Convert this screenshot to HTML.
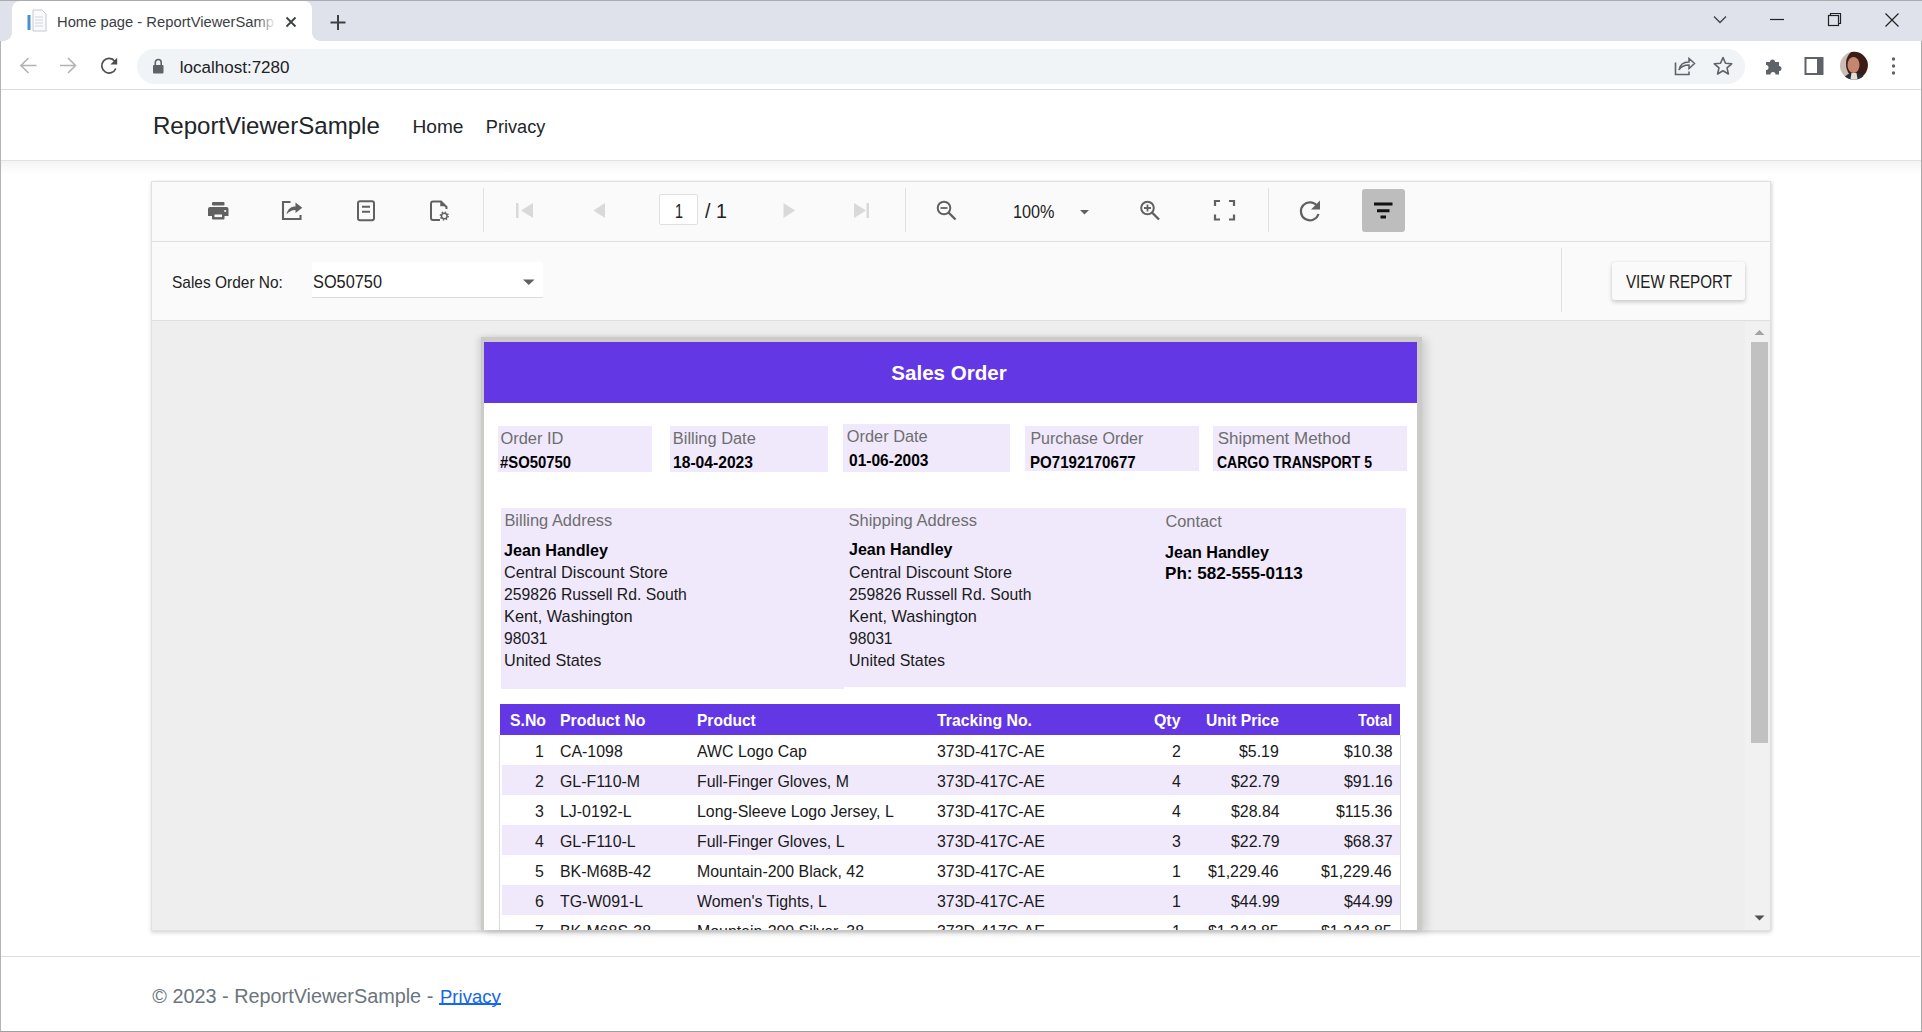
<!DOCTYPE html><html lang="en"><head><meta charset="utf-8"><title>Home page - ReportViewerSample</title><style>

*{margin:0;padding:0;box-sizing:content-box}
html,body{width:1922px;height:1032px;overflow:hidden;background:#fff;font-family:"Liberation Sans",sans-serif;}
.t{position:absolute;white-space:nowrap;line-height:1;transform-origin:0 0;}

</style></head><body>
<div style="position:absolute;left:0;top:0;width:1922px;height:41px;background:#dfe2ea;"></div>
<div style="position:absolute;left:0;top:0;width:1922px;height:1px;background:#a9abb0;"></div>
<div style="position:absolute;left:12px;top:1px;width:300px;height:48px;background:#fff;border-radius:8px 8px 0 0;"></div>
<div style="position:absolute;left:4px;top:33px;width:8px;height:8px;background:radial-gradient(circle at 0 0,#dfe2ea 7.5px,#fff 8px);"></div>
<div style="position:absolute;left:312px;top:33px;width:8px;height:8px;background:radial-gradient(circle at 100% 0,#dfe2ea 7.5px,#fff 8px);"></div>
<div style="position:absolute;left:0;top:41px;width:1922px;height:48px;background:#fff;"></div>
<div style="position:absolute;left:0;top:89px;width:1922px;height:1px;background:#dadce0;"></div>
<div style="position:absolute;left:137px;top:49px;width:1608px;height:35px;background:#f0f4f7;border-radius:18px;"></div>
<div style="position:absolute;left:0;top:41px;width:1px;height:991px;background:#b4b4b4;"></div>
<div style="position:absolute;left:1921px;top:41px;width:1px;height:991px;background:#a8a8a8;"></div>
<div style="position:absolute;left:0;top:1031px;width:1922px;height:1px;background:#a0a0a0;"></div>
<div style="position:absolute;left:1px;top:160px;width:1920px;height:1px;background:#e2e2e2;"></div>
<div style="position:absolute;left:1px;top:161px;width:1920px;height:14px;background:linear-gradient(rgba(0,0,0,.045),rgba(0,0,0,0));"></div>
<div style="position:absolute;left:1px;top:956px;width:1919px;height:1px;background:#dcdcdc;"></div>
<div style="position:absolute;left:439px;top:1003px;width:62px;height:1.5px;background:#1467e6;"></div>
<div style="position:absolute;left:151px;top:181px;width:1620px;height:750px;background:#eeeeee;border:1px solid #e0e0e0;box-sizing:border-box;box-shadow:0 2px 4px rgba(0,0,0,.14), 2px 0 3px rgba(0,0,0,.06);"></div>
<div style="position:absolute;left:152px;top:182px;width:1618px;height:59px;background:#fafafa;border-bottom:1px solid #e0e0e0;"></div>
<div style="position:absolute;left:152px;top:242px;width:1618px;height:78px;background:#fafafa;border-bottom:1px solid #e0e0e0;"></div>
<div style="position:absolute;left:483px;top:188px;width:1px;height:44px;background:#e0e0e0;"></div>
<div style="position:absolute;left:905px;top:188px;width:1px;height:44px;background:#e0e0e0;"></div>
<div style="position:absolute;left:1268px;top:188px;width:1px;height:44px;background:#e0e0e0;"></div>
<div style="position:absolute;left:1561px;top:248px;width:1px;height:64px;background:#e0e0e0;"></div>
<div style="position:absolute;left:659px;top:194px;width:39px;height:31px;background:#fff;border:1px solid #e0e0e0;box-sizing:border-box;border-radius:2px;"></div>
<div style="position:absolute;left:1362px;top:189px;width:43px;height:43px;background:#bdbdbd;border-radius:3px;"></div>
<div style="position:absolute;left:312px;top:262px;width:231px;height:35px;background:#fff;border-bottom:1px solid #dcdcdc;"></div>
<div style="position:absolute;left:1612px;top:262px;width:133px;height:38px;background:#fafafa;border-radius:2px;box-shadow:0 2px 4px rgba(0,0,0,.2),0 0 1px rgba(0,0,0,.15);"></div>
<div style="position:absolute;left:1745px;top:322px;width:24px;height:608px;background:#f1f1f1;"></div>
<div style="position:absolute;left:1751px;top:342px;width:17px;height:401px;background:#c1c1c1;"></div>
<div style="position:absolute;left:481px;top:337px;width:941px;height:593px;background:#cdcbc7;box-shadow:-3px 0 6px rgba(0,0,0,.10), 5px 2px 8px rgba(0,0,0,.12);"></div>
<div style="position:absolute;left:484px;top:342px;width:933px;height:588px;background:#fff;"></div>
<div style="position:absolute;left:484px;top:342px;width:933px;height:61px;background:#6337e3;"></div>
<div style="position:absolute;left:498px;top:426px;width:154px;height:46px;background:#f0e9fc;"></div>
<div style="position:absolute;left:670px;top:426px;width:158px;height:46px;background:#f0e9fc;"></div>
<div style="position:absolute;left:843px;top:424px;width:167px;height:48px;background:#f0e9fc;"></div>
<div style="position:absolute;left:1025px;top:426px;width:174px;height:45px;background:#f0e9fc;"></div>
<div style="position:absolute;left:1213px;top:426px;width:194px;height:45px;background:#f0e9fc;"></div>
<div style="position:absolute;left:501px;top:508px;width:343px;height:181px;background:#f0e9fc;"></div>
<div style="position:absolute;left:843px;top:508px;width:563px;height:179px;background:#f0e9fc;"></div>
<div style="position:absolute;left:500px;top:704px;width:900px;height:31px;background:#6337e3;"></div>
<div style="position:absolute;left:502px;top:735px;width:898px;height:30px;background:#fff;"></div>
<div style="position:absolute;left:502px;top:765px;width:898px;height:30px;background:#f0e9fc;"></div>
<div style="position:absolute;left:502px;top:795px;width:898px;height:30px;background:#fff;"></div>
<div style="position:absolute;left:502px;top:825px;width:898px;height:30px;background:#f0e9fc;"></div>
<div style="position:absolute;left:502px;top:855px;width:898px;height:30px;background:#fff;"></div>
<div style="position:absolute;left:502px;top:885px;width:898px;height:30px;background:#f0e9fc;"></div>
<div style="position:absolute;left:502px;top:915px;width:898px;height:15px;background:#fff;"></div>
<div style="position:absolute;left:499px;top:735px;width:1px;height:195px;background:#dadada;"></div>
<div style="position:absolute;left:1400px;top:735px;width:1px;height:195px;background:#dadada;"></div>
<div class="t" style="left:57.00px;top:15.00px;font-size:14.75px;color:#3c4043;">Home page - ReportViewerSamp</div>
<div class="t" style="left:179.70px;top:58.80px;font-size:17.05px;color:#202124;">localhost:7280</div>
<div class="t" style="left:152.90px;top:114.00px;font-size:24.07px;color:#212529;">ReportViewerSample</div>
<div class="t" style="left:412.50px;top:116.90px;font-size:19.12px;color:#212529;">Home</div>
<div class="t" style="left:485.80px;top:117.90px;font-size:18.15px;color:#212529;">Privacy</div>
<div class="t" style="left:152.30px;top:986.80px;font-size:19.83px;color:#6c757d;">© 2023 - ReportViewerSample -</div>
<div class="t" style="left:440.00px;top:987.80px;font-size:18.52px;color:#1467e6;">Privacy</div>
<div class="t" style="left:674.80px;top:202.00px;font-size:19.48px;color:#212121;transform:scaleX(0.7401);">1</div>
<div class="t" style="left:704.50px;top:202.00px;font-size:19.48px;color:#212121;transform:scaleX(1.0061);">/ 1</div>
<div class="t" style="left:1013.00px;top:201.70px;font-size:19.19px;color:#212121;transform:scaleX(0.8458);">100%</div>
<div class="t" style="left:172.40px;top:274.00px;font-size:17.15px;color:#212121;transform:scaleX(0.9026);">Sales Order No:</div>
<div class="t" style="left:312.50px;top:273.00px;font-size:18.60px;color:#212121;transform:scaleX(0.8778);">SO50750</div>
<div class="t" style="left:1625.80px;top:273.00px;font-size:18.90px;color:#212121;transform:scaleX(0.8034);">VIEW REPORT</div>
<div style="position:absolute;left:484px;top:342px;width:933px;height:588px;overflow:hidden">
<div class="t" style="left:407.30px;top:20.80px;font-size:20.55px;font-weight:bold;color:#ffffff;">Sales Order</div>
<div class="t" style="left:16.40px;top:87.60px;font-size:16.43px;color:#6e6e6e;">Order ID</div>
<div class="t" style="left:16.40px;top:112.50px;font-size:15.99px;font-weight:bold;color:#000;transform:scaleX(0.9285);">#SO50750</div>
<div class="t" style="left:188.80px;top:87.60px;font-size:16.41px;color:#6e6e6e;">Billing Date</div>
<div class="t" style="left:188.80px;top:112.50px;font-size:15.99px;font-weight:bold;color:#000;transform:scaleX(0.9782);">18-04-2023</div>
<div class="t" style="left:362.80px;top:85.70px;font-size:16.37px;color:#6e6e6e;">Order Date</div>
<div class="t" style="left:365.30px;top:111.00px;font-size:15.99px;font-weight:bold;color:#000;transform:scaleX(0.9721);">01-06-2003</div>
<div class="t" style="left:546.40px;top:88.60px;font-size:16.01px;color:#6e6e6e;">Purchase Order</div>
<div class="t" style="left:546.40px;top:112.50px;font-size:15.99px;font-weight:bold;color:#000;transform:scaleX(0.9434);">PO7192170677</div>
<div class="t" style="left:733.70px;top:88.60px;font-size:16.97px;color:#6e6e6e;">Shipment Method</div>
<div class="t" style="left:732.70px;top:112.50px;font-size:15.99px;font-weight:bold;color:#000;transform:scaleX(0.8767);">CARGO TRANSPORT 5</div>
<div class="t" style="left:20.40px;top:169.70px;font-size:16.46px;color:#6e6e6e;">Billing Address</div>
<div class="t" style="left:364.50px;top:170.70px;font-size:16.52px;color:#6e6e6e;">Shipping Address</div>
<div class="t" style="left:681.40px;top:170.70px;font-size:16.39px;color:#6e6e6e;">Contact</div>
<div class="t" style="left:20.40px;top:200.60px;font-size:16.86px;font-weight:bold;color:#000;transform:scaleX(0.9567);">Jean Handley</div>
<div class="t" style="left:364.50px;top:200.30px;font-size:16.86px;font-weight:bold;color:#000;transform:scaleX(0.9521);">Jean Handley</div>
<div class="t" style="left:681.40px;top:202.60px;font-size:16.86px;font-weight:bold;color:#000;transform:scaleX(0.9567);">Jean Handley</div>
<div class="t" style="left:681.40px;top:224.40px;font-size:16.86px;font-weight:bold;color:#000;transform:scaleX(1.0130);">Ph: 582-555-0113</div>
<div class="t" style="left:20.40px;top:221.80px;font-size:17.15px;color:#1a1a1a;transform:scaleX(0.9505);">Central Discount Store</div>
<div class="t" style="left:364.50px;top:222.30px;font-size:17.15px;color:#1a1a1a;transform:scaleX(0.9447);">Central Discount Store</div>
<div class="t" style="left:20.40px;top:243.80px;font-size:17.15px;color:#1a1a1a;transform:scaleX(0.9182);">259826 Russell Rd. South</div>
<div class="t" style="left:364.50px;top:244.30px;font-size:17.15px;color:#1a1a1a;transform:scaleX(0.9157);">259826 Russell Rd. South</div>
<div class="t" style="left:20.40px;top:265.80px;font-size:17.15px;color:#1a1a1a;transform:scaleX(0.9543);">Kent, Washington</div>
<div class="t" style="left:364.50px;top:266.30px;font-size:17.15px;color:#1a1a1a;transform:scaleX(0.9498);">Kent, Washington</div>
<div class="t" style="left:20.40px;top:287.80px;font-size:17.15px;color:#1a1a1a;transform:scaleX(0.9144);">98031</div>
<div class="t" style="left:364.50px;top:288.30px;font-size:17.15px;color:#1a1a1a;transform:scaleX(0.9144);">98031</div>
<div class="t" style="left:20.40px;top:309.80px;font-size:17.15px;color:#1a1a1a;transform:scaleX(0.9461);">United States</div>
<div class="t" style="left:364.50px;top:310.30px;font-size:17.15px;color:#1a1a1a;transform:scaleX(0.9325);">United States</div>
<div class="t" style="left:25.60px;top:371.30px;font-size:16.86px;font-weight:bold;color:#ffffff;transform:scaleX(0.9375);">S.No</div>
<div class="t" style="left:76.00px;top:371.30px;font-size:16.86px;font-weight:bold;color:#ffffff;transform:scaleX(0.9408);">Product No</div>
<div class="t" style="left:212.80px;top:371.30px;font-size:16.86px;font-weight:bold;color:#ffffff;transform:scaleX(0.9216);">Product</div>
<div class="t" style="left:452.90px;top:371.30px;font-size:16.86px;font-weight:bold;color:#ffffff;transform:scaleX(0.9387);">Tracking No.</div>
<div class="t" style="left:670.30px;top:371.30px;font-size:16.86px;font-weight:bold;color:#ffffff;transform:scaleX(0.9426);">Qty</div>
<div class="t" style="left:722.10px;top:371.30px;font-size:16.86px;font-weight:bold;color:#ffffff;transform:scaleX(0.9276);">Unit Price</div>
<div class="t" style="left:874.20px;top:371.30px;font-size:16.86px;font-weight:bold;color:#ffffff;transform:scaleX(0.8711);">Total</div>
<div class="t" style="left:51.18px;top:400.60px;font-size:17.00px;color:#1a1a1a;transform:scaleX(0.9350);">1</div>
<div class="t" style="left:76.30px;top:400.60px;font-size:17.00px;color:#1a1a1a;transform:scaleX(0.9350);">CA-1098</div>
<div class="t" style="left:213.00px;top:400.60px;font-size:17.00px;color:#1a1a1a;transform:scaleX(0.9350);">AWC Logo Cap</div>
<div class="t" style="left:453.30px;top:400.60px;font-size:17.00px;color:#1a1a1a;transform:scaleX(0.9350);">373D-417C-AE</div>
<div class="t" style="left:687.98px;top:400.60px;font-size:17.00px;color:#1a1a1a;transform:scaleX(0.9350);">2</div>
<div class="t" style="left:755.32px;top:400.60px;font-size:17.00px;color:#1a1a1a;transform:scaleX(0.9350);">$5.19</div>
<div class="t" style="left:859.60px;top:400.60px;font-size:17.00px;color:#1a1a1a;transform:scaleX(0.9350);">$10.38</div>
<div class="t" style="left:51.18px;top:430.60px;font-size:17.00px;color:#1a1a1a;transform:scaleX(0.9350);">2</div>
<div class="t" style="left:76.30px;top:430.60px;font-size:17.00px;color:#1a1a1a;transform:scaleX(0.9350);">GL-F110-M</div>
<div class="t" style="left:213.00px;top:430.60px;font-size:17.00px;color:#1a1a1a;transform:scaleX(0.9350);">Full-Finger Gloves, M</div>
<div class="t" style="left:453.30px;top:430.60px;font-size:17.00px;color:#1a1a1a;transform:scaleX(0.9350);">373D-417C-AE</div>
<div class="t" style="left:687.98px;top:430.60px;font-size:17.00px;color:#1a1a1a;transform:scaleX(0.9350);">4</div>
<div class="t" style="left:746.50px;top:430.60px;font-size:17.00px;color:#1a1a1a;transform:scaleX(0.9350);">$22.79</div>
<div class="t" style="left:859.60px;top:430.60px;font-size:17.00px;color:#1a1a1a;transform:scaleX(0.9350);">$91.16</div>
<div class="t" style="left:51.18px;top:460.60px;font-size:17.00px;color:#1a1a1a;transform:scaleX(0.9350);">3</div>
<div class="t" style="left:76.30px;top:460.60px;font-size:17.00px;color:#1a1a1a;transform:scaleX(0.9350);">LJ-0192-L</div>
<div class="t" style="left:213.00px;top:460.60px;font-size:17.00px;color:#1a1a1a;transform:scaleX(0.9350);">Long-Sleeve Logo Jersey, L</div>
<div class="t" style="left:453.30px;top:460.60px;font-size:17.00px;color:#1a1a1a;transform:scaleX(0.9350);">373D-417C-AE</div>
<div class="t" style="left:687.98px;top:460.60px;font-size:17.00px;color:#1a1a1a;transform:scaleX(0.9350);">4</div>
<div class="t" style="left:746.50px;top:460.60px;font-size:17.00px;color:#1a1a1a;transform:scaleX(0.9350);">$28.84</div>
<div class="t" style="left:851.93px;top:460.60px;font-size:17.00px;color:#1a1a1a;transform:scaleX(0.9350);">$115.36</div>
<div class="t" style="left:51.18px;top:490.60px;font-size:17.00px;color:#1a1a1a;transform:scaleX(0.9350);">4</div>
<div class="t" style="left:76.30px;top:490.60px;font-size:17.00px;color:#1a1a1a;transform:scaleX(0.9350);">GL-F110-L</div>
<div class="t" style="left:213.00px;top:490.60px;font-size:17.00px;color:#1a1a1a;transform:scaleX(0.9350);">Full-Finger Gloves, L</div>
<div class="t" style="left:453.30px;top:490.60px;font-size:17.00px;color:#1a1a1a;transform:scaleX(0.9350);">373D-417C-AE</div>
<div class="t" style="left:687.98px;top:490.60px;font-size:17.00px;color:#1a1a1a;transform:scaleX(0.9350);">3</div>
<div class="t" style="left:746.50px;top:490.60px;font-size:17.00px;color:#1a1a1a;transform:scaleX(0.9350);">$22.79</div>
<div class="t" style="left:859.60px;top:490.60px;font-size:17.00px;color:#1a1a1a;transform:scaleX(0.9350);">$68.37</div>
<div class="t" style="left:51.18px;top:520.60px;font-size:17.00px;color:#1a1a1a;transform:scaleX(0.9350);">5</div>
<div class="t" style="left:76.30px;top:520.60px;font-size:17.00px;color:#1a1a1a;transform:scaleX(0.9350);">BK-M68B-42</div>
<div class="t" style="left:213.00px;top:520.60px;font-size:17.00px;color:#1a1a1a;transform:scaleX(0.9350);">Mountain-200 Black, 42</div>
<div class="t" style="left:453.30px;top:520.60px;font-size:17.00px;color:#1a1a1a;transform:scaleX(0.9350);">373D-417C-AE</div>
<div class="t" style="left:687.98px;top:520.60px;font-size:17.00px;color:#1a1a1a;transform:scaleX(0.9350);">1</div>
<div class="t" style="left:724.37px;top:520.60px;font-size:17.00px;color:#1a1a1a;transform:scaleX(0.9350);">$1,229.46</div>
<div class="t" style="left:837.47px;top:520.60px;font-size:17.00px;color:#1a1a1a;transform:scaleX(0.9350);">$1,229.46</div>
<div class="t" style="left:51.18px;top:550.60px;font-size:17.00px;color:#1a1a1a;transform:scaleX(0.9350);">6</div>
<div class="t" style="left:76.30px;top:550.60px;font-size:17.00px;color:#1a1a1a;transform:scaleX(0.9350);">TG-W091-L</div>
<div class="t" style="left:213.00px;top:550.60px;font-size:17.00px;color:#1a1a1a;transform:scaleX(0.9350);">Women&#x27;s Tights, L</div>
<div class="t" style="left:453.30px;top:550.60px;font-size:17.00px;color:#1a1a1a;transform:scaleX(0.9350);">373D-417C-AE</div>
<div class="t" style="left:687.98px;top:550.60px;font-size:17.00px;color:#1a1a1a;transform:scaleX(0.9350);">1</div>
<div class="t" style="left:746.50px;top:550.60px;font-size:17.00px;color:#1a1a1a;transform:scaleX(0.9350);">$44.99</div>
<div class="t" style="left:859.60px;top:550.60px;font-size:17.00px;color:#1a1a1a;transform:scaleX(0.9350);">$44.99</div>
<div class="t" style="left:51.18px;top:580.60px;font-size:17.00px;color:#1a1a1a;transform:scaleX(0.9350);">7</div>
<div class="t" style="left:76.30px;top:580.60px;font-size:17.00px;color:#1a1a1a;transform:scaleX(0.9350);">BK-M68S-38</div>
<div class="t" style="left:213.00px;top:580.60px;font-size:17.00px;color:#1a1a1a;transform:scaleX(0.9350);">Mountain-200 Silver, 38</div>
<div class="t" style="left:453.30px;top:580.60px;font-size:17.00px;color:#1a1a1a;transform:scaleX(0.9350);">373D-417C-AE</div>
<div class="t" style="left:687.98px;top:580.60px;font-size:17.00px;color:#1a1a1a;transform:scaleX(0.9350);">1</div>
<div class="t" style="left:724.37px;top:580.60px;font-size:17.00px;color:#1a1a1a;transform:scaleX(0.9350);">$1,242.85</div>
<div class="t" style="left:837.47px;top:580.60px;font-size:17.00px;color:#1a1a1a;transform:scaleX(0.9350);">$1,242.85</div>
</div>
<div style="position:absolute;left:256px;top:10px;width:20px;height:24px;background:linear-gradient(90deg,rgba(255,255,255,0),#fff)"></div>
<svg width="1922" height="1032" viewBox="0 0 1922 1032" style="position:absolute;left:0;top:0;pointer-events:none">
<rect x="27.5" y="15" width="3" height="15" fill="#4a8fd0"/>
<path d="M33 10 H42 L46 14 V31 H33 Z" fill="#fafafa" stroke="#c4c8cc" stroke-width="1"/>
<path d="M35 17h8M35 20h8M35 23h8M35 26h8" stroke="#d0d4d8" stroke-width="1"/>
<path d="M286.5 17.5 L295.5 26.5 M295.5 17.5 L286.5 26.5" stroke="#3c4043" stroke-width="1.8"/>
<path d="M338 15 V30 M330.5 22.5 H345.5" stroke="#3c4043" stroke-width="2"/>
<path d="M1714 16.5 L1720 22.5 L1726 16.5" fill="none" stroke="#3c4043" stroke-width="1.3"/>
<path d="M1770 19.5 H1784" stroke="#202124" stroke-width="1.2"/>
<rect x="1828.5" y="15.5" width="10" height="10" fill="none" stroke="#202124" stroke-width="1.2"/><path d="M1830.5 15.5 V13.5 H1840.5 V23.5 H1838.5" fill="none" stroke="#202124" stroke-width="1.2"/>
<path d="M1885.5 13.5 L1898.5 26.5 M1898.5 13.5 L1885.5 26.5" stroke="#202124" stroke-width="1.2"/>
<path d="M36.5 65.5 H21.5 M28.5 58 L21 65.5 L28.5 73" fill="none" stroke="#b0b2b5" stroke-width="1.6"/>
<path d="M60 65.5 H75.5 M68 58 L75.5 65.5 L68 73" fill="none" stroke="#b0b2b5" stroke-width="1.6"/>
<path d="M114.8 61.2 A7.3 7.3 0 1 0 115.8 68.5" fill="none" stroke="#4a4d51" stroke-width="1.7"/><path d="M117.2 57.8 V64.6 H110.4 Z" fill="#4a4d51"/>
<rect x="153" y="65" width="10.5" height="8.5" rx="1" fill="#5f6368"/><path d="M155.3 65 V62.5 A2.9 2.9 0 0 1 161.2 62.5 V65" fill="none" stroke="#5f6368" stroke-width="1.6"/>
<path d="M1675.5 62.5 V74.5 H1689 V71.5" fill="none" stroke="#5f6368" stroke-width="1.6"/><path d="M1679 70 C1680 64 1684 62 1689 62 V58.5 L1694.5 63.5 L1689 68.5 V65 C1685 65 1681 66.5 1679 70 Z" fill="none" stroke="#5f6368" stroke-width="1.5"/>
<path d="M1723 57.5 L1725.5 63.3 L1731.7 63.8 L1727 67.9 L1728.4 74 L1723 70.8 L1717.6 74 L1719 67.9 L1714.3 63.8 L1720.5 63.3 Z" fill="none" stroke="#5f6368" stroke-width="1.6" stroke-linejoin="round"/>
<path d="M1766 62 H1770 A2.5 2.5 0 0 1 1775 62 H1779 V66 A2.5 2.5 0 0 1 1779 71 V74.5 H1775.5 A2.5 2.5 0 0 0 1770.5 74.5 H1766 V70 A2.5 2.5 0 0 0 1766 65 Z" fill="#5f6368"/>
<rect x="1805.5" y="58" width="17" height="16" fill="none" stroke="#5f6368" stroke-width="2"/><rect x="1817" y="58" width="5.5" height="16" fill="#5f6368"/>
<clipPath id="av"><circle cx="1854" cy="65.8" r="14"/></clipPath><g clip-path="url(#av)"><rect x="1838" y="50" width="32" height="32" fill="#cbbdb5"/><ellipse cx="1857" cy="64" rx="11" ry="14" fill="#3b1c16"/><ellipse cx="1853.5" cy="65" rx="6" ry="8" fill="#c4866e"/><path d="M1840 82 Q1846 74 1851 73 H1857 Q1863 74 1868 82 Z" fill="#26303c"/><path d="M1850 82 L1851.5 73 H1856.5 L1858 82 Z" fill="#e8dcd8"/></g>
<circle cx="1893.5" cy="59" r="1.7" fill="#5f6368"/><circle cx="1893.5" cy="66" r="1.7" fill="#5f6368"/><circle cx="1893.5" cy="73" r="1.7" fill="#5f6368"/>
<rect x="212" y="202" width="12.5" height="3.5" rx="1" fill="#616161"/><path d="M210 207 H226.5 Q228.5 207 228.5 209 V216 H208 V209 Q208 207 210 207 Z" fill="#616161"/><rect x="212" y="213.5" width="12.5" height="6" rx="1" fill="#616161"/><rect x="214.5" y="214.5" width="7.5" height="2.6" fill="#fafafa"/><circle cx="225.2" cy="211" r="1.1" fill="#fafafa"/>
<path d="M290.5 202 H283 V219 H300.5 V215" fill="none" stroke="#616161" stroke-width="2.1"/><path d="M286.5 214.5 C287.5 209 291 206.5 295.5 206.5 V202.5 L302.3 207.8 L295.5 213 V210 C291.5 210 289 211.5 286.5 214.5 Z" fill="#616161"/>
<rect x="358" y="201.3" width="16" height="19" rx="2" fill="none" stroke="#616161" stroke-width="2"/><path d="M362 206.8 H370 M362 211.8 H370" stroke="#616161" stroke-width="1.9"/>
<path d="M440 220 H433 Q431 220 431 218 V203.5 Q431 201.5 433 201.5 H441 L446.5 207 V209" fill="none" stroke="#616161" stroke-width="2"/><path d="M441 201.5 V205.5 H445" fill="#616161" stroke="#616161" stroke-width="1.5"/><circle cx="444.3" cy="216" r="2.8" fill="none" stroke="#616161" stroke-width="1.5"/><circle cx="444.3" cy="216" r="4" fill="none" stroke="#616161" stroke-width="1.3" stroke-dasharray="1.4 1.74"/>
<rect x="516" y="203" width="2.5" height="15" fill="#d9d9d9"/><path d="M533 203 L521 210.5 L533 218 Z" fill="#d9d9d9"/>
<path d="M605 203 L593.5 210.5 L605 218 Z" fill="#d9d9d9"/>
<path d="M783.5 203 L795 210.5 L783.5 218 Z" fill="#d9d9d9"/>
<path d="M854 203 L866 210.5 L854 218 Z" fill="#d9d9d9"/><rect x="866.5" y="203" width="2.5" height="15" fill="#d9d9d9"/>
<circle cx="944" cy="208" r="6.3" fill="none" stroke="#616161" stroke-width="2"/><path d="M948.5 212.5 L955.5 219.5" stroke="#616161" stroke-width="2.4"/><path d="M940.5 208 H947.5" stroke="#616161" stroke-width="1.8"/>
<path d="M1080 210 H1089 L1084.5 214.5 Z" fill="#616161"/>
<circle cx="1147.5" cy="208" r="6.3" fill="none" stroke="#616161" stroke-width="2"/><path d="M1152 212.5 L1159 219.5" stroke="#616161" stroke-width="2.4"/><path d="M1144 208 H1151 M1147.5 204.5 V211.5" stroke="#616161" stroke-width="1.8"/>
<path d="M1215 206 V201 H1220 M1229 201 H1234 V206 M1234 214.5 V219.5 H1229 M1220 219.5 H1215 V214.5" fill="none" stroke="#616161" stroke-width="2.2"/>
<path d="M1317.5 206.5 A9 9 0 1 0 1318.5 214" fill="none" stroke="#616161" stroke-width="2.2"/><path d="M1320 200.5 V209.5 H1311 Z" fill="#616161"/>
<path d="M1374 204 H1392.5 M1377 210.8 H1389.5 M1380.5 217 H1386" stroke="#111" stroke-width="3"/>
<path d="M523 279.5 H534.5 L528.75 285 Z" fill="#616161"/>
<path d="M1754.5 335 H1764.5 L1759.5 330 Z" fill="#a3a3a3"/>
<path d="M1754.5 915.5 H1764.5 L1759.5 920.5 Z" fill="#505050"/>
</svg></body></html>
